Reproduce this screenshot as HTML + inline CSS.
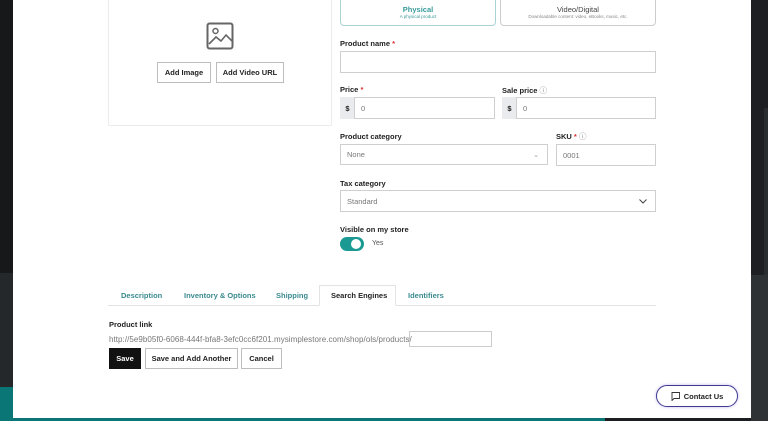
<!DOCTYPE html>
<html><head><meta charset="utf-8"><style>
*{box-sizing:border-box;margin:0;padding:0}
body{width:768px;height:421px;overflow:hidden;position:relative;background:#1b1d20;font-family:"Liberation Sans",sans-serif;color:#222}
.a{position:absolute}
.lbl{font-size:7.5px;font-weight:bold;color:#222}
.req{color:#d33}
.inp{border:1px solid #cfcfcf;background:#fff;font-size:7.5px;color:#777;padding-left:6px;display:flex;align-items:center}
.btn{border:1px solid #bdbdbd;background:#fff;font-size:7.5px;font-weight:bold;color:#222;display:flex;align-items:center;justify-content:center}
.tab{font-size:7.5px;color:#3a8a8f;font-weight:bold}
</style></head><body>
<div class="a" style="left:0;top:0;width:13px;height:273px;background:#16181a"></div>
<div class="a" style="left:0;top:273px;width:13px;height:114px;background:#25282b"></div>
<div class="a" style="left:0;top:387px;width:13px;height:34px;background:#0b7676"></div>
<div class="a" style="left:13px;top:418px;width:592px;height:3px;background:#0b7676"></div>
<div class="a" style="left:751px;top:0;width:17px;height:275px;background:#1d1f22"></div>
<div class="a" style="left:751px;top:275px;width:17px;height:146px;background:#2f3235"></div>
<div class="a" style="left:764px;top:108px;width:4px;height:167px;background:#2a2d30"></div>

<div class="a" style="left:13px;top:0;width:738px;height:418px;background:#fff"></div>

<div class="a" style="left:108px;top:-2px;width:224px;height:128px;border:1px solid #ececec"></div>
<svg class="a" style="left:206px;top:22px" width="29" height="28" viewBox="0 0 29 28"><rect x="1.5" y="1.5" width="25" height="25" rx="2" fill="none" stroke="#666" stroke-width="2"/><circle cx="9.5" cy="9" r="2.5" fill="none" stroke="#666" stroke-width="1.5"/><path d="M3 22 L10 15 L15 19 L20 13 L26 19" fill="none" stroke="#666" stroke-width="1.6"/></svg>
<div class="a btn" style="left:157px;top:62px;width:54px;height:21px">Add Image</div>
<div class="a btn" style="left:216px;top:62px;width:68px;height:21px">Add Video URL</div>

<div class="a" style="left:340px;top:-6px;width:156px;height:32px;border:1px solid #a9d3d3;border-radius:4px"></div>
<div class="a" style="left:340px;top:5px;width:156px;text-align:center;font-size:7.5px;font-weight:bold;color:#3a9b9b">Physical</div>
<div class="a" style="left:340px;top:14px;width:156px;text-align:center;font-size:4.5px;color:#3a9b9b">A physical product</div>
<div class="a" style="left:500px;top:-6px;width:156px;height:32px;border:1px solid #ccc;border-radius:4px"></div>
<div class="a" style="left:500px;top:5px;width:156px;text-align:center;font-size:7.5px;color:#444">Video/Digital</div>
<div class="a" style="left:500px;top:14px;width:156px;text-align:center;font-size:4.5px;color:#888">Downloadable content: video, eBooks, music, etc.</div>

<div class="a lbl" style="left:340px;top:39px">Product name <span class="req">*</span></div>
<div class="a inp" style="left:340px;top:51px;width:316px;height:22px"></div>

<div class="a lbl" style="left:340px;top:85px">Price <span class="req">*</span></div>
<div class="a" style="left:340px;top:97px;width:15px;height:22px;background:#e9ebee;font-size:7.5px;font-weight:bold;display:flex;align-items:center;justify-content:center">$</div>
<div class="a inp" style="left:354px;top:97px;width:141px;height:22px">0</div>
<div class="a lbl" style="left:502px;top:85px">Sale price <span style="font-weight:normal;color:#888">ⓘ</span></div>
<div class="a" style="left:502px;top:97px;width:15px;height:22px;background:#e9ebee;font-size:7.5px;font-weight:bold;display:flex;align-items:center;justify-content:center">$</div>
<div class="a inp" style="left:516px;top:97px;width:140px;height:22px">0</div>

<div class="a lbl" style="left:340px;top:132px">Product category</div>
<div class="a inp" style="left:340px;top:144px;width:208px;height:21px">None<span style="position:absolute;right:8px;color:#999;font-size:7px">⌄</span></div>
<div class="a lbl" style="left:556px;top:131px">SKU <span class="req">*</span> <span style="font-weight:normal;color:#888">ⓘ</span></div>
<div class="a inp" style="left:556px;top:144px;width:100px;height:22px">0001</div>

<div class="a lbl" style="left:340px;top:179px">Tax category</div>
<div class="a inp" style="left:340px;top:190px;width:316px;height:22px">Standard
<svg style="position:absolute;right:8px;top:8px" width="8" height="5" viewBox="0 0 8 5"><path d="M0.5 0.5 L4 4 L7.5 0.5" fill="none" stroke="#444" stroke-width="1"/></svg></div>

<div class="a lbl" style="left:340px;top:225px">Visible on my store</div>
<div class="a" style="left:340px;top:237px;width:24px;height:14px;border-radius:7px;background:#1b9a94"></div>
<div class="a" style="left:351px;top:239px;width:10px;height:10px;border-radius:5px;background:#fff"></div>
<div class="a" style="left:372px;top:240px;font-size:7px;color:#555">Yes</div>

<div class="a" style="left:108px;top:305px;width:548px;height:1px;background:#e3e3e3"></div>
<div class="a tab" style="left:121px;top:291px">Description</div>
<div class="a tab" style="left:184px;top:291px">Inventory &amp; Options</div>
<div class="a tab" style="left:276px;top:291px">Shipping</div>
<div class="a" style="left:319px;top:285px;width:77px;height:21px;border:1px solid #e3e3e3;border-bottom:1px solid #fff;background:#fff"></div>
<div class="a tab" style="left:331px;top:291px;color:#222">Search Engines</div>
<div class="a tab" style="left:408px;top:291px">Identifiers</div>

<div class="a lbl" style="left:109px;top:320px">Product link</div>
<div class="a" style="left:109px;top:335px;font-size:8px;letter-spacing:0.05px;color:#777;white-space:nowrap">http://5e9b05f0-6068-444f-bfa8-3efc0cc6f201.mysimplestore.com/shop/ols/products/</div>
<div class="a" style="left:409px;top:331px;width:83px;height:16px;border:1px solid #ccc"></div>

<div class="a btn" style="left:109px;top:348px;width:32px;height:21px;background:#111;color:#fff;border-color:#111">Save</div>
<div class="a btn" style="left:145px;top:348px;width:93px;height:21px">Save and Add Another</div>
<div class="a btn" style="left:241px;top:348px;width:41px;height:21px">Cancel</div>

<div class="a" style="left:656px;top:385px;width:82px;height:22px;border:1.5px solid #3d3a8f;border-radius:11px;background:#fff;box-shadow:0 0 3px #c9b8f0;display:flex;align-items:center;justify-content:center;font-size:7.5px;font-weight:bold;color:#222">
<svg width="9" height="9" viewBox="0 0 9 9" style="margin-right:4px"><path d="M0.5 0.5 H8.5 V6.5 H3 L1 8.5 V0.5 Z" fill="none" stroke="#333" stroke-width="0.9"/></svg>Contact Us</div>
</body></html>
